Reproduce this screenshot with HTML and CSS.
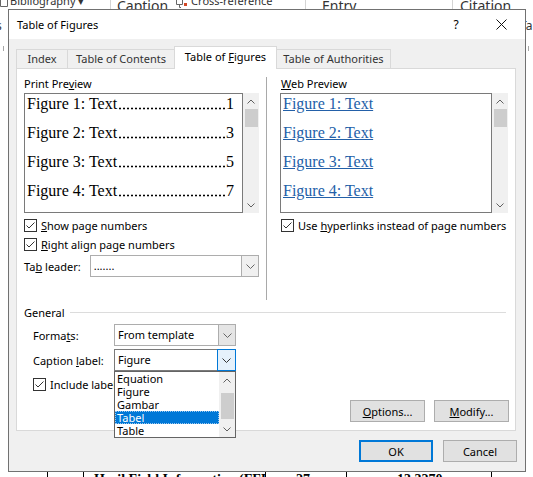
FILE: index.html
```html
<!DOCTYPE html>
<html>

<head>
  <meta charset="utf-8">

  <title>Table of Figures</title>

  <link rel="stylesheet" href="styles.css">
</head>

<body>
<div class="page">
  <div class="ribbon">
    <div class="rb-group rb-bib">
      <svg class="rb-icon" width="8" height="7" viewBox="0 0 8 7"><path d="M0.5 0V6.5H7.5V0" fill="none" stroke="#666"/></svg>
      <span class="rb-small">Bibliography ▾</span>
    </div>
    <div class="rb-group rb-caption">
      <span class="rb-big">Caption</span>
      <svg class="rb-xref" width="12" height="8" viewBox="0 0 12 8"><path d="M0.5 0V4.5H6.5V0M3.5 4.5V7.5H5" fill="none" stroke="#666"/><rect x="8" y="3" width="3" height="3" fill="#d24726"/></svg>
      <span class="rb-small">Cross-reference</span>
    </div>
    <div class="rb-group rb-entry"><span class="rb-big">Entry</span></div>
    <div class="rb-group rb-cite"><span class="rb-big">Citation</span></div>
  </div>

  <div class="doc-mid">
    <div class="edge edge-left"><span class="edge-text">s</span><div class="ruler"></div></div>
    <div class="edge edge-right"><span class="edge-text">Ta</span><div class="ruler"></div></div>
  </div>

  <div class="doc-table">
    <div class="cell c1"></div>
    <div class="cell c2"></div>
    <div class="cell c3">Hasil Field Information (FFI)</div>
    <div class="cell c4">27</div>
    <div class="cell c5">13.3270</div>
    <div class="cell c6"></div>
  </div>

  <div class="dialog">
    <div class="titlebar">
      <span class="title">Table of Figures</span>
      <span class="help">?</span>
      <span class="close">
        <svg width="11" height="11" viewBox="0 0 11 11"><path d="M0.5 0.5L10.5 10.5M10.5 0.5L0.5 10.5" fill="none" stroke="#111"/></svg>
      </span>
    </div>

    <div class="content">
      <div class="tabs">
        <div class="tab t-index">Index</div>
        <div class="tab t-toc">Table of Contents</div>
        <div class="tab t-tof active">Table of <u>F</u>igures</div>
        <div class="tab t-toa">Table of Authorities</div>
      </div>

      <div class="panel">
        <div class="previews">
          <div class="print-col">
            <div class="label">Print Pre<u>v</u>iew</div>
            <div class="preview-wrap">
              <div class="preview-box">
                <div class="toc-line"><span>Figure 1: Text</span><span class="dots"></span><span>1</span></div>
                <div class="toc-line"><span>Figure 2: Text</span><span class="dots"></span><span>3</span></div>
                <div class="toc-line"><span>Figure 3: Text</span><span class="dots"></span><span>5</span></div>
                <div class="toc-line"><span>Figure 4: Text</span><span class="dots"></span><span>7</span></div>
              </div>
              <div class="scrollbar">
                <div class="sb-btn"><svg width="8" height="5" viewBox="0 0 8 5"><path d="M0.5 4.5L4 1L7.5 4.5" fill="none" stroke="#606060"/></svg></div>
                <div class="sb-track"><div class="sb-thumb"></div></div>
                <div class="sb-btn"><svg width="8" height="5" viewBox="0 0 8 5"><path d="M0.5 0.5L4 4L7.5 0.5" fill="none" stroke="#606060"/></svg></div>
              </div>
            </div>

            <div class="check-row first">
              <span class="box"><svg width="11" height="11" viewBox="0 0 11 11"><path d="M1.5 5.5L4 8L9.5 2.5" fill="none" stroke="#333"/></svg></span>
              <span><u>S</u>how page numbers</span>
            </div>
            <div class="check-row">
              <span class="box"><svg width="11" height="11" viewBox="0 0 11 11"><path d="M1.5 5.5L4 8L9.5 2.5" fill="none" stroke="#333"/></svg></span>
              <span><u>R</u>ight align page numbers</span>
            </div>

            <div class="leader-row">
              <span class="leader-label">Ta<u>b</u> leader:</span>
              <div class="select leader-select">
                <span class="value">.......</span>
                <span class="arrow"><svg width="9" height="5" viewBox="0 0 9 5"><path d="M0.5 0.5L4.5 4.5L8.5 0.5" fill="none" stroke="#666"/></svg></span>
              </div>
            </div>
          </div>

          <div class="divider"></div>

          <div class="web-col">
            <div class="label"><u>W</u>eb Preview</div>
            <div class="preview-wrap">
              <div class="preview-box web-box">
                <a class="web-link">Figure 1: Text</a>
                <a class="web-link">Figure 2: Text</a>
                <a class="web-link">Figure 3: Text</a>
                <a class="web-link">Figure 4: Text</a>
              </div>
              <div class="scrollbar">
                <div class="sb-btn"><svg width="8" height="5" viewBox="0 0 8 5"><path d="M0.5 4.5L4 1L7.5 4.5" fill="none" stroke="#606060"/></svg></div>
                <div class="sb-track"><div class="sb-thumb"></div></div>
                <div class="sb-btn"><svg width="8" height="5" viewBox="0 0 8 5"><path d="M0.5 0.5L4 4L7.5 0.5" fill="none" stroke="#606060"/></svg></div>
              </div>
            </div>
            <div class="check-row first">
              <span class="box"><svg width="11" height="11" viewBox="0 0 11 11"><path d="M1.5 5.5L4 8L9.5 2.5" fill="none" stroke="#333"/></svg></span>
              <span>Use <u>h</u>yperlinks instead of page numbers</span>
            </div>
          </div>
        </div>

        <div class="general">
          <div class="group-title"><span>General</span><div class="group-line"></div></div>

          <div class="form-row formats-row">
            <span class="form-label">Forma<u>t</u>s:</span>
            <div class="select">
              <span class="value">From template</span>
              <span class="arrow"><svg width="9" height="5" viewBox="0 0 9 5"><path d="M0.5 0.5L4.5 4.5L8.5 0.5" fill="none" stroke="#666"/></svg></span>
            </div>
          </div>

          <div class="form-row caption-row">
            <span class="form-label">Caption <u>l</u>abel:</span>
            <div class="select focus">
              <span class="value">Figure</span>
              <span class="arrow"><svg width="9" height="5" viewBox="0 0 9 5"><path d="M0.5 0.5L4.5 4.5L8.5 0.5" fill="none" stroke="#333"/></svg></span>
              <div class="droplist">
                <div class="items">
                  <div class="item">Equation</div>
                  <div class="item">Figure</div>
                  <div class="item">Gambar</div>
                  <div class="item selected">Tabel</div>
                  <div class="item">Table</div>
                </div>
                <div class="scrollbar list-sb">
                  <div class="sb-btn"><svg width="8" height="5" viewBox="0 0 8 5"><path d="M0.5 4.5L4 1L7.5 4.5" fill="none" stroke="#606060"/></svg></div>
                  <div class="sb-track"><div class="sb-thumb"></div></div>
                  <div class="sb-btn"><svg width="8" height="5" viewBox="0 0 8 5"><path d="M0.5 0.5L4 4L7.5 0.5" fill="none" stroke="#606060"/></svg></div>
                </div>
              </div>
            </div>
          </div>

          <div class="check-row include-row">
            <span class="box"><svg width="11" height="11" viewBox="0 0 11 11"><path d="M1.5 5.5L4 8L9.5 2.5" fill="none" stroke="#333"/></svg></span>
            <span>Include label and number</span>
          </div>

          <div class="btn-row">
            <button class="btn"><u>O</u>ptions...</button>
            <button class="btn"><u>M</u>odify...</button>
          </div>
        </div>
      </div>

      <div class="footer">
        <button class="btn btn-default">OK</button>
        <button class="btn">Cancel</button>
      </div>
    </div>
  </div>
</div>
</body>

</html>
```

FILE: styles.css
```css
* {
  box-sizing: border-box;
}

body {
  margin: 0;
  font-family: "Noto Sans", "Open Sans", sans-serif;
  font-size: 11px;
  color: #000;
  background-color: #fff;
}

.page {
  position: relative;
  width: 533px;
  height: 477px;
  overflow: hidden;
}

/* word window behind the dialog */

.ribbon {
  display: flex;
  height: 9px;
  overflow: hidden;
  color: #333;
}

.rb-group {
  display: flex;
  align-items: flex-start;
  height: 9px;
  border-right: 1px solid #d4d4d4;
  white-space: nowrap;
}

.rb-bib {
  width: 111px;
}

.rb-caption {
  width: 195px;
  padding-left: 6px;
}

.rb-entry {
  width: 147px;
  padding-left: 16px;
}

.rb-cite {
  flex: 1;
  padding-left: 7px;
  border-right: none;
}

.rb-icon {
  margin-right: 2px;
}

.rb-small {
  display: block;
  line-height: 14px;
  margin-top: -6px;
}

.rb-big {
  display: block;
  font-size: 14px;
  line-height: 18px;
  margin-top: -3px;
}

.rb-xref {
  margin: 0 3px 0 8px;
}

.doc-mid {
  display: flex;
  justify-content: space-between;
  height: 462px;
}

.edge {
  width: 8px;
  overflow: hidden;
  color: #333;
  font-size: 12px;
}

.edge-text {
  display: block;
  margin-top: 9px;
  line-height: 16px;
  white-space: nowrap;
}

.edge-left .edge-text {
  margin-left: -4px;
}

.edge-right .edge-text {
  margin-left: -5px;
}

.ruler {
  width: 1px;
  height: 5px;
  margin: 12px 0 0 3px;
  background-color: #a6a6a6;
}

.doc-table {
  display: flex;
  height: 6px;
  overflow: hidden;
  font-family: "Liberation Serif", serif;
  font-weight: bold;
  font-size: 14px;
}

.cell {
  border-right: 1px solid #000;
  line-height: 18px;
  white-space: nowrap;
  overflow: hidden;
}

.c1 { width: 48px; }
.c2 { width: 36px; }
.c3 { width: 182px; padding-left: 10px; }
.c4 { width: 81px; padding-left: 30px; }
.c5 { width: 145px; padding-left: 50px; }
.c6 { flex: 1; border-right: none; }

/* the dialog */

.dialog {
  position: absolute;
  left: 8px;
  top: 9px;
  width: 518px;
  height: 463px;
  display: flex;
  flex-direction: column;
  border: 1px solid #717171;
  background-color: #f0f0f0;
  z-index: 2;
}

.titlebar {
  display: flex;
  align-items: center;
  height: 29px;
  padding-left: 8px;
  background-color: #fff;
}

.title {
  flex: 1;
}

.help {
  width: 30px;
  text-align: center;
  font-size: 12px;
}

.close {
  display: flex;
  align-items: center;
  justify-content: center;
  width: 46px;
  height: 29px;
  margin: 0 1px 0 7px;
}

.content {
  padding: 7px 9px 0 7px;
}

.tabs {
  display: flex;
  align-items: flex-end;
  height: 22px;
}

.tab {
  height: 19px;
  line-height: 17px;
  margin-left: -1px;
  border: 1px solid #d9d9d9;
  border-bottom: none;
  text-align: center;
  color: #333;
}

.tab.active {
  position: relative;
  height: 23px;
  line-height: 20px;
  margin-bottom: -1px;
  background-color: #fff;
  color: #000;
  z-index: 1;
}

.t-index { width: 52px; margin-left: 0; }
.t-toc { width: 108px; }
.t-tof { width: 103px; }
.t-toa { width: 115px; }

.panel {
  height: 363px;
  border: 1px solid #d9d9d9;
  background-color: #fff;
}

.previews {
  display: flex;
  height: 231px;
  padding: 7px 0 0 7px;
}

.print-col {
  width: 235px;
}

.web-col {
  width: 228px;
  margin-left: 13px;
}

.divider {
  width: 1px;
  margin: 1px 0 0 7px;
  background-color: #a9a9a9;
}

.label {
  height: 16px;
  line-height: 16px;
  margin-bottom: 1px;
}

.web-col .label {
  padding-left: 1px;
}

.preview-wrap {
  display: flex;
  height: 120px;
}

.preview-box {
  flex: 1;
  display: flex;
  flex-direction: column;
  gap: 13px;
  border: 1px solid #7a7a7a;
  padding: 2px 8px 0 2px;
  font-family: "Liberation Serif", "Times New Roman", serif;
  font-size: 16px;
  overflow: hidden;
}

.toc-line {
  display: flex;
  height: 16px;
  line-height: 16px;
  white-space: nowrap;
}

/* dotted tab leader between title and page number */
.dots {
  flex: 1;
  margin: 0 1px 0 1px;
  background-image: radial-gradient(circle, #000 0.9px, transparent 1.2px);
  background-size: 4px 3px;
  background-repeat: repeat-x;
  background-position: 0 11px;
}

.web-link {
  height: 16px;
  line-height: 16px;
  color: #2360a8;
  text-decoration: underline;
}

.scrollbar {
  display: flex;
  flex-direction: column;
  width: 16px;
  background-color: #f0f0f0;
}

.sb-btn {
  display: flex;
  align-items: center;
  justify-content: center;
  height: 16px;
}

.sb-track {
  flex: 1;
  padding: 0 1px 0 2px;
}

.sb-thumb {
  height: 18px;
  background-color: #cdcdcd;
}

.check-row {
  display: flex;
  align-items: center;
  height: 19px;
  white-space: nowrap;
}

.check-row.first {
  margin-top: 3px;
}

.web-col .check-row {
  padding-left: 1px;
}

.box {
  display: flex;
  width: 13px;
  height: 13px;
  margin-right: 4px;
  border: 1px solid #333;
  background-color: #fff;
}

.leader-row {
  display: flex;
  align-items: center;
  margin-top: 1px;
}

.leader-label {
  width: 66px;
}

.select {
  position: relative;
  display: flex;
  width: 122px;
  height: 22px;
  border: 1px solid #adadad;
  background-color: #fff;
}

.leader-select {
  width: 170px;
}

.select .value {
  flex: 1;
  padding-left: 3px;
  line-height: 20px;
}

.select .arrow {
  display: flex;
  align-items: center;
  justify-content: center;
  width: 17px;
  border-left: 1px solid #adadad;
  background-color: #e5e5e5;
}

.leader-select .arrow {
  background-color: #f0f0f0;
}

.select.focus {
  border-color: #7a7a7a;
}

.select.focus .arrow {
  width: 19px;
  margin: -1px -1px -1px 0;
  border: 1px solid #0078d7;
  background-color: #e5f1fb;
}

.general {
  padding: 4px 6px 0 7px;
}

.group-title {
  display: flex;
  align-items: center;
  height: 16px;
}

.group-line {
  flex: 1;
  height: 1px;
  margin: 0 3px 0 5px;
  background-color: #dcdcdc;
}

.form-row {
  display: flex;
  align-items: center;
  padding-left: 9px;
}

.formats-row {
  margin-top: 4px;
}

.caption-row {
  margin-top: 3px;
}

.form-label {
  width: 81px;
}

.droplist {
  position: absolute;
  top: 21px;
  left: -1px;
  display: flex;
  width: 122px;
  height: 67px;
  border: 1px solid #646464;
  background-color: #fff;
  z-index: 3;
}

.items {
  width: 104px;
}

.item {
  height: 13px;
  line-height: 13px;
  padding-left: 2px;
}

.item.selected {
  background-color: #0078d7;
  color: #fff;
  outline: 1px dotted #9cc8ee;
  outline-offset: -1px;
}

.list-sb {
  width: 16px;
}

.list-sb .sb-track {
  padding-top: 5px;
}

.list-sb .sb-thumb {
  height: 26px;
}

.include-row {
  margin-top: 4px;
  padding-left: 9px;
}

.btn-row {
  display: flex;
  justify-content: flex-end;
  gap: 9px;
  margin-top: 6px;
}

.btn {
  width: 75px;
  height: 22px;
  padding: 0;
  border: 1px solid #adadad;
  background-color: #e1e1e1;
  font-family: "Noto Sans", "Open Sans", sans-serif;
  font-size: 11px;
  color: #000;
}

.footer {
  display: flex;
  justify-content: flex-end;
  gap: 10px;
  margin: 9px -1px 0 0;
}

.footer .btn {
  width: 74px;
}

.btn-default {
  border: 2px solid #0078d7;
}
```
